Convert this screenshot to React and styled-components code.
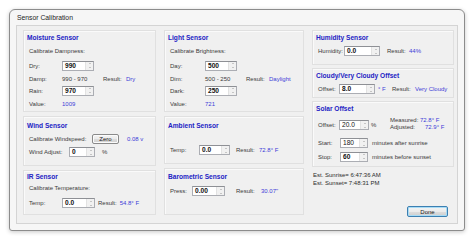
import React from "react";
import styled, { createGlobalStyle } from "styled-components";

const GlobalStyle = createGlobalStyle`
  html, body {
    margin: 0;
    padding: 0;
    background: #ffffff;
  }
  body {
    font-family: "Liberation Sans", Arial, sans-serif;
    font-size: 6px;
    color: #3a3a3a;
  }
`;

const Page = styled.div`
  width: 474px;
  height: 241px;
  padding: 9px 0 0 9px;
  box-sizing: border-box;
`;

const Window = styled.div`
  width: 456px;
  height: 222px;
  box-sizing: border-box;
  border: 1px solid #8c8c8c;
  border-radius: 6px 6px 3px 3px;
  background: #f6f6f6;
  box-shadow: 0 1px 4px rgba(0, 0, 0, 0.22);
  padding: 0 6px 6px 6px;
  display: flex;
  flex-direction: column;
`;

const TitleBar = styled.div`
  height: 15px;
  display: flex;
  align-items: center;
  padding-left: 1px;
  font-size: 6.8px;
  color: #1e1e1e;
`;

const Client = styled.div`
  flex: 1;
  background: #f0f0f0;
  border: 1px solid #d4d4d4;
  display: grid;
  grid-template-columns: 133px 140px 142px;
  column-gap: 8px;
  padding: 4px 0 0 6px;
`;

const Column = styled.div`
  display: flex;
  flex-direction: column;
  gap: ${p => p.$gap || 4}px;
`;

const Panel = styled.div`
  height: ${p => p.$h}px;
  box-sizing: border-box;
  border: 1px solid #e0e0e0;
  box-shadow: inset 1px 1px 0 #fafafa;
  padding-left: 3px;
  display: flex;
  flex-direction: column;
`;

const Heading = styled.div`
  height: ${p => p.$h}px;
  display: flex;
  align-items: center;
  font-weight: bold;
  font-size: 6.6px;
  color: #2222c4;
  white-space: nowrap;
`;

const Row = styled.div`
  height: ${p => p.$h}px;
  display: flex;
  align-items: center;
  padding-left: 2px;
  padding-top: ${p => p.$pt || 0}px;
  white-space: nowrap;
`;

const Label = styled.span`
  width: ${p => p.$w}px;
  flex: none;
`;

const Plain = styled.span`
  display: inline-block;
  width: ${p => (p.$w ? `${p.$w}px` : "auto")};
  margin-left: ${p => p.$ml || 0}px;
  flex: none;
`;

const Value = styled.span`
  display: inline-block;
  color: #3d3dd8;
  margin-left: ${p => p.$ml || 0}px;
  width: ${p => (p.$w ? `${p.$w}px` : "auto")};
  flex: none;
`;

const SpinBox = styled.div`
  width: ${p => p.$w}px;
  height: 10px;
  box-sizing: border-box;
  border: 1px solid #abadb3;
  border-top-color: #8e9095;
  background: #ffffff;
  display: flex;
  flex: none;
`;

const SpinText = styled.span`
  flex: 1;
  padding-left: 2px;
  line-height: 8px;
  font-size: 6.6px;
  color: #111;
  font-weight: ${p => (p.$bold ? "bold" : "normal")};
`;

const SpinButtons = styled.div`
  width: 7px;
  display: flex;
  flex-direction: column;
  border-left: 1px solid #e2e2e2;
  background: #f1f1f1;
`;

const Arrow = styled.div`
  flex: 1;
  display: flex;
  align-items: center;
  justify-content: center;
  &::after {
    content: "";
    border-left: 1.5px solid transparent;
    border-right: 1.5px solid transparent;
    ${p =>
      p.$down
        ? "border-top: 1.5px solid #9a9a9a;"
        : "border-bottom: 1.5px solid #9a9a9a;"}
  }
`;

const Button = styled.button`
  width: ${p => p.$w}px;
  height: ${p => p.$h}px;
  padding: 0;
  font-family: inherit;
  font-size: 6px;
  color: #222;
  border: 1px solid ${p => (p.$focus ? "#3c7fb1" : "#8a8a8a")};
  border-radius: 2px;
  background: linear-gradient(#f4f4f4 0%, #ebebeb 50%, #dddddd 51%, #cfcfcf 100%);
  box-shadow: inset 0 0 0 1px ${p => (p.$focus ? "#a8dcf6" : "#fbfbfb")};
  flex: none;
`;

const Reading = styled.div`
  margin-top: -2px;
  line-height: 7px;
`;

const EstText = styled.div`
  margin-top: 1px;
  padding-left: 1px;
  line-height: 8px;
  color: #2b2b2b;
`;

const Footer = styled.div`
  margin-top: auto;
  display: flex;
  justify-content: flex-end;
  padding: 0 6px 6px 0;
`;

const Spin = ({ w, bold, children }) => (
  <SpinBox $w={w}>
    <SpinText $bold={bold}>{children}</SpinText>
    <SpinButtons>
      <Arrow />
      <Arrow $down />
    </SpinButtons>
  </SpinBox>
);

export default function App() {
  return (
    <Page>
      <GlobalStyle />
      <Window>
        <TitleBar>Sensor Calibration</TitleBar>
        <Client>
          <Column>
            <Panel $h={82}>
              <Heading $h={12}>Moisture Sensor</Heading>
              <Row $h={15}>Calibrate Dampness:</Row>
              <Row $h={15}>
                <Label $w={33}>Dry:</Label>
                <Spin w={32} bold>990</Spin>
              </Row>
              <Row $h={12}>
                <Label $w={33}>Damp:</Label>
                <Plain $w={41}>990 - 970</Plain>
                <Label $w={23}>Result:</Label>
                <Value>Dry</Value>
              </Row>
              <Row $h={11}>
                <Label $w={33}>Rain:</Label>
                <Spin w={32} bold>970</Spin>
              </Row>
              <Row $h={15}>
                <Label $w={33}>Value:</Label>
                <Value>1009</Value>
              </Row>
            </Panel>
            <Panel $h={50}>
              <Heading $h={16}>Wind Sensor</Heading>
              <Row $h={11}>
                <Label $w={63}>Calibrate Windspeed:</Label>
                <Button $w={27} $h={10}>Zero</Button>
                <Value $ml={8}>0.08 v</Value>
              </Row>
              <Row $h={16}>
                <Label $w={40}>Wind Adjust:</Label>
                <Spin w={26} bold>0</Spin>
                <Plain $ml={7}>%</Plain>
              </Row>
            </Panel>
            <Panel $h={45}>
              <Heading $h={10}>IR Sensor</Heading>
              <Row $h={14}>Calibrate Temperature:</Row>
              <Row $h={16}>
                <Label $w={33}>Temp:</Label>
                <Spin w={33} bold>0.0</Spin>
                <Plain $ml={3}>Result:</Plain>
                <Value $ml={3}>54.8° F</Value>
              </Row>
            </Panel>
          </Column>

          <Column>
            <Panel $h={82}>
              <Heading $h={12}>Light Sensor</Heading>
              <Row $h={15}>Calibrate Brightness:</Row>
              <Row $h={15}>
                <Label $w={35}>Day:</Label>
                <Spin w={32} bold>500</Spin>
              </Row>
              <Row $h={12}>
                <Label $w={35}>Dim:</Label>
                <Plain $w={41}>500 - 250</Plain>
                <Label $w={23}>Result:</Label>
                <Value>Daylight</Value>
              </Row>
              <Row $h={11}>
                <Label $w={35}>Dark:</Label>
                <Spin w={32} bold>250</Spin>
              </Row>
              <Row $h={15}>
                <Label $w={35}>Value:</Label>
                <Value>721</Value>
              </Row>
            </Panel>
            <Panel $h={48}>
              <Heading $h={16}>Ambient Sensor</Heading>
              <Row $h={22} $pt={6}>
                <Label $w={29}>Temp:</Label>
                <Spin w={31} bold>0.0</Spin>
                <Plain $ml={6} $w={23}>Result:</Plain>
                <Value>72.8° F</Value>
              </Row>
            </Panel>
            <Panel $h={47}>
              <Heading $h={14}>Barometric Sensor</Heading>
              <Row $h={16}>
                <Label $w={22}>Press:</Label>
                <Spin w={33} bold>0.00</Spin>
                <Plain $ml={11} $w={25}>Result:</Plain>
                <Value>30.07"</Value>
              </Row>
            </Panel>
          </Column>

          <Column $gap={3}>
            <Panel $h={35}>
              <Heading $h={12}>Humidity Sensor</Heading>
              <Row $h={16}>
                <Label $w={26}>Humidity:</Label>
                <Spin w={36} bold>0.0</Spin>
                <Plain $ml={7} $w={22}>Result:</Plain>
                <Value>44%</Value>
              </Row>
            </Panel>
            <Panel $h={30}>
              <Heading $h={12}>Cloudy/Very Cloudy Offset</Heading>
              <Row $h={16}>
                <Label $w={21}>Offset:</Label>
                <Spin w={36} bold>8.0</Spin>
                <Value $ml={3} $w={14}>° F</Value>
                <Plain $w={23}>Result:</Plain>
                <Value>Very Cloudy</Value>
              </Row>
            </Panel>
            <Panel $h={66}>
              <Heading $h={12}>Solar Offset</Heading>
              <Row $h={22}>
                <Label $w={21}>Offset:</Label>
                <Spin w={30}>20.0</Spin>
                <Plain $ml={2} $w={19}>%</Plain>
                <Reading>
                  <div>
                    <Plain $w={30}>Measured:</Plain>
                    <Value>72.8° F</Value>
                  </div>
                  <div>
                    <Plain $w={35}>Adjusted:</Plain>
                    <Value>72.9° F</Value>
                  </div>
                </Reading>
              </Row>
              <Row $h={14}>
                <Label $w={22}>Start:</Label>
                <Spin w={28}>180</Spin>
                <Plain $ml={4}>minutes after sunrise</Plain>
              </Row>
              <Row $h={13}>
                <Label $w={22}>Stop:</Label>
                <Spin w={28} bold>60</Spin>
                <Plain $ml={4}>minutes before sunset</Plain>
              </Row>
            </Panel>
            <EstText>
              <div>Est. Sunrise= 6:47:36 AM</div>
              <div>Est. Sunset= 7:48:31 PM</div>
            </EstText>
            <Footer>
              <Button $w={41} $h={11} $focus>Done</Button>
            </Footer>
          </Column>
        </Client>
      </Window>
    </Page>
  );
}
